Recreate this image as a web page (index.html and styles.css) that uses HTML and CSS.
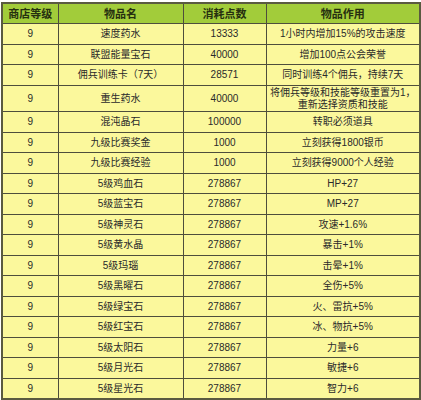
FILE: index.html
```html
<!DOCTYPE html>
<html>
<head>
<meta charset="utf-8">
<link rel="stylesheet" href="styles.css">
</head>
<body>
<table class="shop">
<colgroup><col class="c1"><col class="c2"><col class="c3"><col class="c4"></colgroup>
<thead>
<tr class="head"><th>商店等级</th><th>物品名</th><th>消耗点数</th><th>物品作用</th></tr>
</thead>
<tbody>
<tr class="a"><td>9</td><td>速度药水</td><td>13333</td><td>1小时内增加15%的攻击速度</td></tr>
<tr class="b"><td>9</td><td>联盟能量宝石</td><td>40000</td><td>增加100点公会荣誉</td></tr>
<tr class="a"><td>9</td><td>佣兵训练卡（7天）</td><td>28571</td><td>同时训练4个佣兵，持续7天</td></tr>
<tr class="tall"><td>9</td><td>重生药水</td><td>40000</td><td class="two">将佣兵等级和技能等级重置为1，<br>重新选择资质和技能</td></tr>
<tr class="a"><td>9</td><td>混沌晶石</td><td>100000</td><td>转职必须道具</td></tr>
<tr class="b"><td>9</td><td>九级比赛奖金</td><td>1000</td><td>立刻获得1800银币</td></tr>
<tr class="a"><td>9</td><td>九级比赛经验</td><td>1000</td><td>立刻获得9000个人经验</td></tr>
<tr class="b"><td>9</td><td>5级鸡血石</td><td>278867</td><td>HP+27</td></tr>
<tr class="a"><td>9</td><td>5级蓝宝石</td><td>278867</td><td>MP+27</td></tr>
<tr class="b"><td>9</td><td>5级神灵石</td><td>278867</td><td>攻速+1.6%</td></tr>
<tr class="a"><td>9</td><td>5级黄水晶</td><td>278867</td><td>暴击+1%</td></tr>
<tr class="b"><td>9</td><td>5级玛瑙</td><td>278867</td><td>击晕+1%</td></tr>
<tr class="a"><td>9</td><td>5级黑曜石</td><td>278867</td><td>全伤+5%</td></tr>
<tr class="b"><td>9</td><td>5级绿宝石</td><td>278867</td><td>火、雷抗+5%</td></tr>
<tr class="a"><td>9</td><td>5级红宝石</td><td>278867</td><td>冰、物抗+5%</td></tr>
<tr class="b"><td>9</td><td>5级太阳石</td><td>278867</td><td>力量+6</td></tr>
<tr class="a"><td>9</td><td>5级月光石</td><td>278867</td><td>敏捷+6</td></tr>
<tr class="b"><td>9</td><td>5级星光石</td><td>278867</td><td>智力+6</td></tr>
</tbody>
</table>
</body>
</html>
```
FILE: styles.css
```css
html, body {
  margin: 0;
  padding: 0;
  background: #ffffff;
}
body {
  padding: 2px 0 0 1px;
}
.shop {
  border-collapse: collapse;
  table-layout: fixed;
  width: 418px;
  border: 2px solid #5a5a40;
  font-family: "Liberation Sans", "Noto Sans CJK SC", sans-serif;
  font-size: 10px;
  color: #2a2a2a;
}
.c1 { width: 56px; }
.c2 { width: 125px; }
.c3 { width: 83px; }
.c4 { width: 154px; }
.shop th, .shop td {
  border: 1px solid #4e4e3c;
  text-align: center;
  padding: 0;
  white-space: nowrap;
  line-height: 12px;
}
.shop th {
  background: #a2cc3a;
  font-size: 11px;
  font-weight: bold;
  color: #263010;
  height: 19px;
}
.shop td {
  background: #fbf89c;
}
.a td { height: 20px; }
.b td { height: 19px; }
.tall td { height: 25px; }
.two { line-height: 12px; }
```
